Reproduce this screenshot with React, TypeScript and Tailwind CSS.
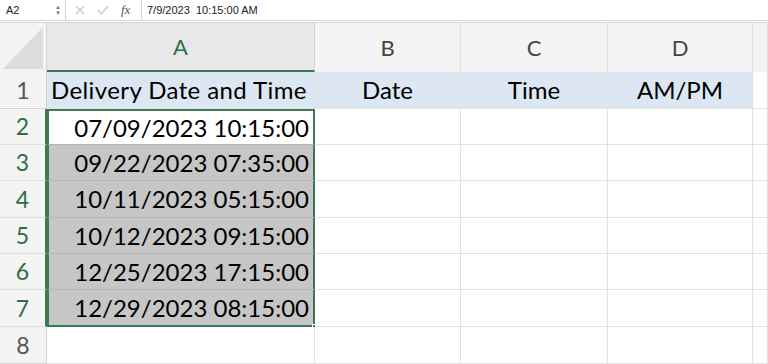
import React from 'react';

const cols = ['A', 'B', 'C', 'D', 'E'];
const rowHeights = ['h-[37px]', 'h-[36px]', 'h-[36px]', 'h-[37px]', 'h-[36px]', 'h-[36px]', 'h-[37px]', 'h-[37px]'];
const dates = ['07/09/2023 10:15:00', '09/22/2023 07:35:00', '10/11/2023 05:15:00', '10/12/2023 09:15:00', '12/25/2023 17:15:00', '12/29/2023 08:15:00'];
const widths = ['w-[268px]', 'w-[146px]', 'w-[147px]', 'w-[145px]', 'flex-1'];

const App = () => {
  return <div className="w-[768px] h-[364px] overflow-hidden bg-white" style={{ fontFamily: 'Lato, "Open Sans", sans-serif' }}>
      {/* formula bar */}
      <div className="h-[21px] flex items-center border-b border-[#d4d4d4] text-[11px] text-[#222]" style={{ fontFamily: '"Liberation Sans", Arial, sans-serif' }}>
        <div className="w-[66px] h-full flex items-center justify-between pl-[6px] pr-[4px] border-r border-[#d4d4d4]">
          <span>A2</span>
          <span className="flex flex-col items-center leading-none text-[6px] text-[#777]">
            <span>▲</span>
            <span>▼</span>
          </span>
        </div>
        <div className="w-[76px] h-full flex items-center gap-[12px] pl-[9px] border-r border-[#d4d4d4]">
          <svg width="10" height="10" viewBox="0 0 10 10" stroke="#c8c8c8" strokeWidth="1.2"><path d="M1 1L9 9M9 1L1 9" /></svg>
          <svg width="12" height="10" viewBox="0 0 12 10" fill="none" stroke="#c8c8c8" strokeWidth="1.2"><path d="M1 5L4.5 9L11 1" /></svg>
          <span className="italic text-[13px] text-[#555]" style={{ fontFamily: '"Liberation Serif", serif' }}>fx</span>
        </div>
        <div className="pl-[5px] whitespace-pre">7/9/2023  10:15:00 AM</div>
      </div>
      {/* gap */}
      <div className="h-[1px] bg-white" />
      {/* column headers */}
      <div className="flex h-[50px] border-t border-[#d4d4d4] bg-[#f4f4f4]">
        <div className="w-[47px] h-full border-r border-[#d4d4d4] relative overflow-hidden">
          <svg className="absolute right-[3px] bottom-[3px]" width="40" height="42" viewBox="0 0 40 42"><path d="M40 0L40 42L0 42Z" fill="#dcdcdc" /></svg>
        </div>
        {cols.map((c, i) => <div key={c} className={`${widths[i]} h-full flex items-center justify-center text-[22px] border-r ${i === 0 ? 'bg-[#e8e8e8] text-[#2f6e43] border-b-2 border-b-[#3c7a52] border-r-[#d4d4d4]' : 'text-[#444] border-[#e0e0e0]'}`}>
            {i < 4 ? c : ''}
          </div>)}
      </div>
      {/* rows */}
      {rowHeights.map((h, r) => {
      const active = r >= 1 && r <= 6;
      return <div key={r} className={`flex ${h}`}>
            <div className={`w-[47px] h-full flex items-center justify-center text-[23px] bg-[#f4f4f4] border-r border-b ${active ? 'text-[#2f6e43] border-r-[#3c7a52] border-r-2 border-b-[#e0e0e0]' : 'text-[#555] border-[#d4d4d4]'}`}>
              {r + 1}
            </div>
            {cols.map((c, i) => {
          const header = r === 0 && i < 4;
          let cls = 'border-r border-b border-[#e2e2e2]';
          let fill = header ? 'bg-[#dde7f4]' : 'bg-white';
          let content: React.ReactNode = null;
          if (header) {
            content = i === 0 ? <span className="tracking-[0.4px]">Delivery Date and Time</span> : ['', 'Date', 'Time', 'AM/PM'][i];
          }
          if (i === 0 && active) {
            fill = r === 1 ? 'bg-white' : 'bg-[#c6c6c6]';
            cls = `border-x-2 border-x-[#3c7a52] ${r === 6 ? 'border-b-2 border-b-[#3c7a52]' : 'border-b border-b-[#b4b4b4]'} ${r === 1 ? 'border-t-2 border-t-[#3c7a52]' : ''}`;
            content = dates[r - 1];
          }
          return <div key={c} className={`${widths[i]} h-full relative flex items-center text-[24px] text-black ${cls} ${fill} ${i === 0 && active ? 'justify-end pr-[4px]' : i === 0 ? 'justify-start pl-[4px]' : 'justify-center'}`}>
                  {content}
                  {i === 0 && r === 6 && <span className="absolute right-[-4px] bottom-[-4px] w-[5px] h-[5px] bg-[#3c7a52] border border-white" />}
                </div>;
        })}
          </div>;
    })}
    </div>;
};
export default App;
